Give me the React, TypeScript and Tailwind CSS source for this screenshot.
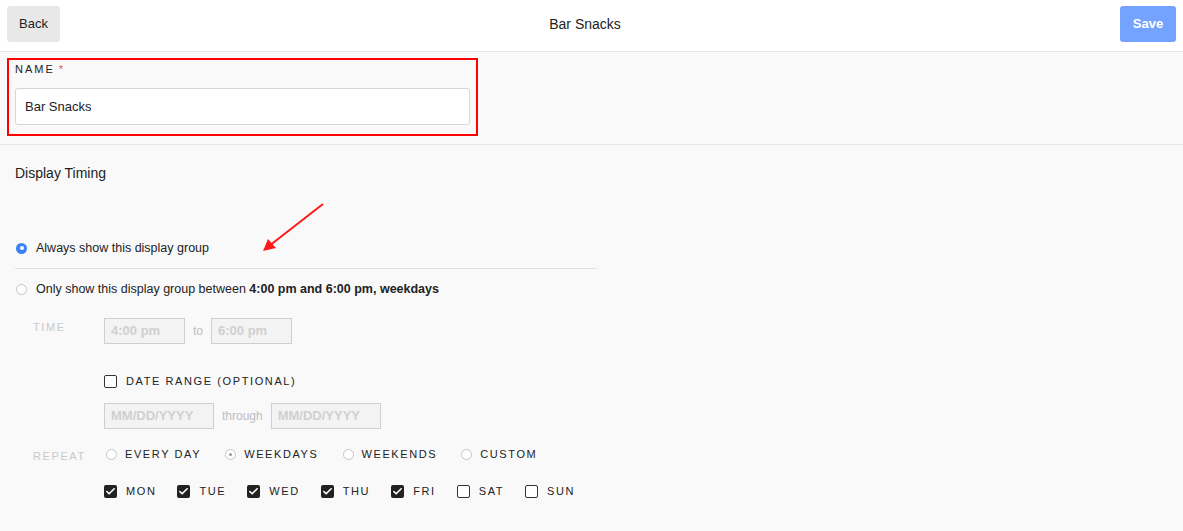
import { Check } from 'lucide-react';

const font = { fontFamily: '"Liberation Sans", Arial, sans-serif' };

const Radio = ({ checked, disabled }: { checked?: boolean; disabled?: boolean }) => {
  if (checked && !disabled) {
    return (
      <span className="flex h-[11px] w-[11px] shrink-0 items-center justify-center rounded-full bg-[#3b82f6]">
        <span className="h-[4px] w-[4px] rounded-full bg-white" />
      </span>
    );
  }
  return (
    <span className="flex h-[11px] w-[11px] shrink-0 items-center justify-center rounded-full border border-[#c4c4c4] bg-white">
      {checked && <span className="h-[3px] w-[3px] rounded-full bg-[#9a9a9a]" />}
    </span>
  );
};

const Box = ({ checked }: { checked?: boolean }) =>
  checked ? (
    <span className="flex h-[13px] w-[13px] shrink-0 items-center justify-center rounded-[2px] bg-[#222]">
      <Check className="h-[11px] w-[11px] text-white" strokeWidth={3.5} />
    </span>
  ) : (
    <span className="h-[13px] w-[13px] shrink-0 rounded-[2px] border-[1.5px] border-[#333] bg-white" />
  );

const FieldBox = ({ value, width }: { value: string; width: string }) => (
  <div
    className={`flex h-[26px] ${width} items-center border border-[#cfcfcf] bg-[#f3f3f3] px-[6px] text-[13px] font-bold text-[#d0d0d0]`}
  >
    {value}
  </div>
);

const days = [
  { label: 'MON', on: true },
  { label: 'TUE', on: true },
  { label: 'WED', on: true },
  { label: 'THU', on: true },
  { label: 'FRI', on: true },
  { label: 'SAT', on: false },
  { label: 'SUN', on: false },
];

const repeats = [
  { label: 'EVERY DAY', on: false },
  { label: 'WEEKDAYS', on: true },
  { label: 'WEEKENDS', on: false },
  { label: 'CUSTOM', on: false },
];

export default function App() {
  return (
    <div className="relative min-h-[531px] w-full bg-[#f9f9f9] text-[#222]" style={font}>
      {/* header */}
      <header className="flex h-[52px] items-start justify-between border-b border-[#e6e6e6] bg-white px-[7px] pt-[6px]">
        <button className="h-[36px] w-[53px] rounded-[3px] bg-[#e8e8e8] text-[13px] text-[#222]">Back</button>
        <div className="flex h-[36px] flex-1 items-center justify-center pr-[10px] text-[14px]">Bar Snacks</div>
        <button className="h-[36px] w-[56px] rounded-[3px] bg-[#74a3ff] text-[13px] font-bold text-white">Save</button>
      </header>

      {/* name */}
      <section className="border-b border-[#e6e6e6] px-[7px] pt-[6px] pb-[8px]">
        <div className="w-[471px] border-2 border-[#ff0000] px-[6px] pt-[2px] pb-[9px]">
          <div className="flex h-[14px] items-center text-[11px] tracking-[2px] text-[#222]">
            NAME <span className="ml-[4px] text-[#e05a4f]">*</span>
          </div>
          <div className="mt-[12px] flex h-[37px] items-center rounded-[3px] border border-[#d6d6d6] bg-white px-[9px] text-[13px]">
            Bar Snacks
          </div>
        </div>
      </section>

      {/* display timing */}
      <section className="px-[15px] pt-[18px]">
        <h2 className="h-[20px] text-[14px] leading-[20px]">Display Timing</h2>

        <div className="mt-[55px] w-[582px] border-b border-[#e2e2e2] pb-[10px]">
          <label className="flex h-[20px] items-center gap-[9px] pl-[1px] text-[12.5px]">
            <Radio checked />
            Always show this display group
          </label>
        </div>

        <label className="mt-[10px] flex h-[20px] items-center gap-[9px] pl-[1px] text-[12.5px]">
          <Radio />
          <span>
            Only show this display group between <b>4:00 pm and 6:00 pm, weekdays</b>
          </span>
        </label>

        <div className="pl-[18px]">
          {/* time */}
          <div className="mt-[19px] flex items-start">
            <div className="w-[71px] pt-[2px] text-[11px] leading-[14px] tracking-[1.6px] text-[#c9c9c9]">TIME</div>
            <div className="flex items-center gap-[8px]">
              <FieldBox value="4:00 pm" width="w-[81px]" />
              <span className="text-[12px] text-[#bdbdbd]">to</span>
              <FieldBox value="6:00 pm" width="w-[81px]" />
            </div>
          </div>

          {/* date range */}
          <div className="mt-[27px] flex h-[20px] items-center gap-[9px] pl-[71px]">
            <Box />
            <span className="text-[11px] tracking-[1.6px]">DATE RANGE (OPTIONAL)</span>
          </div>

          <div className="mt-[12px] flex items-center gap-[8px] pl-[71px]">
            <FieldBox value="MM/DD/YYYY" width="w-[110px]" />
            <span className="text-[12px] text-[#bdbdbd]">through</span>
            <FieldBox value="MM/DD/YYYY" width="w-[110px]" />
          </div>

          {/* repeat */}
          <div className="mt-[15px] flex h-[20px] items-center">
            <div className="w-[73px] pt-[4px] text-[11px] tracking-[1.6px] text-[#c9c9c9]">REPEAT</div>
            <div className="flex items-center gap-[24px]">
              {repeats.map((r) => (
                <label key={r.label} className="flex items-center gap-[8px]">
                  <Radio checked={r.on} disabled />
                  <span className="text-[11px] tracking-[1.6px]">{r.label}</span>
                </label>
              ))}
            </div>
          </div>

          {/* days */}
          <div className="mt-[17px] flex h-[20px] items-center gap-[21px] pl-[71px]">
            {days.map((d) => (
              <label key={d.label} className="flex items-center gap-[9px]">
                <Box checked={d.on} />
                <span className="text-[11px] tracking-[1.6px]">{d.label}</span>
              </label>
            ))}
          </div>
        </div>
      </section>

      {/* annotation arrow */}
      <svg className="pointer-events-none absolute left-[255px] top-[198px]" width="75" height="60" viewBox="0 0 75 60">
        <line x1="68" y1="6" x2="14" y2="48" stroke="#ff1a1a" strokeWidth="2" />
        <polygon points="8,53 13,41 21,50" fill="#ff1a1a" />
      </svg>
    </div>
  );
}
